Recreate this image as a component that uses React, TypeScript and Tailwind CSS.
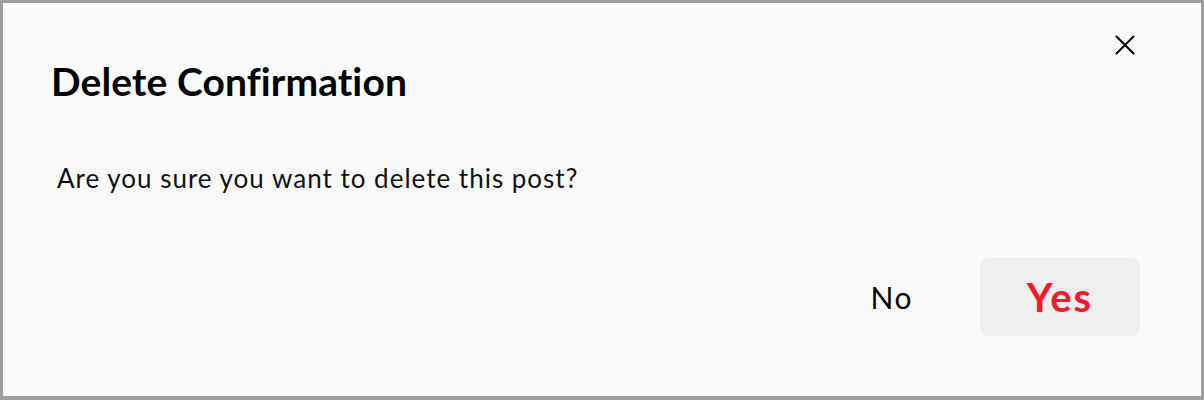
export default function App() {
  return (
    <div className="w-[1204px] h-[400px] bg-[#9e9e9e] pt-[3px] pl-[3px] pr-[3px] pb-[4px] font-['Lato',sans-serif] [font-variant-ligatures:none]">
      <div className="relative w-full h-full bg-[#fafafa] flex flex-col">
        <button className="absolute right-[66px] top-[32px] text-black" aria-label="Close">
          <svg width="20" height="20" viewBox="0 0 20 20" fill="none" stroke="currentColor" strokeWidth="2" strokeLinecap="round">
            <path d="M1.5 1.5 L18.5 18.5 M18.5 1.5 L1.5 18.5" />
          </svg>
        </button>
        <h2 className="mt-[56px] ml-[48px] text-[39px] font-bold text-black leading-[44px] tracking-[0.1px]">
          Delete Confirmation
        </h2>
        <p className="mt-[60px] ml-[54px] text-[26px] tracking-[1px] text-[#111] leading-[30px]">
          Are you sure you want to delete this post?
        </p>
        <div className="mt-auto mb-[60px] mr-[61px] flex items-center justify-end gap-[67px]">
          <button className="text-[30px] text-black tracking-[1.5px]">No</button>
          <button className="w-[160px] h-[78px] rounded-[9px] bg-[#efefef] text-[40px] font-bold text-[#ff1428] tracking-[2px]">
            Yes
          </button>
        </div>
      </div>
    </div>
  );
}
